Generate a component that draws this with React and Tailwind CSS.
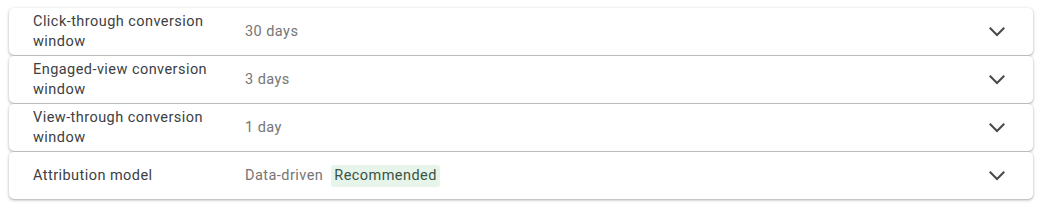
import React from "react";

const rows = [
  { label: "Click-through conversion window", value: "30 days" },
  { label: "Engaged-view conversion window", value: "3 days" },
  { label: "View-through conversion window", value: "1 day" },
  { label: "Attribution model", value: "Data-driven", badge: "Recommended" },
];

function Chevron() {
  return (
    <svg width="16" height="10" viewBox="0 0 16 10" fill="none">
      <path d="M1.5 1.5 L8 8 L14.5 1.5" stroke="#474c49" strokeWidth="2.1" strokeLinecap="square" />
    </svg>
  );
}

export default function App() {
  return (
    <div className="bg-white w-[1043px] h-[208px] pt-[8px] pl-[9px] pr-[10px]" style={{ fontFamily: "Roboto, 'Liberation Sans', sans-serif" }}>
      <div className="flex flex-col gap-[1px]">
        {rows.map((r, i) => (
          <div
            key={i}
            className="h-[47px] bg-white rounded-[5px] flex items-center pl-[24px] pr-[28px] shadow-[0_1px_2px_rgba(60,64,67,0.3),0_1px_3px_1px_rgba(60,64,67,0.12)]"
          >
            <div className="w-[188px] text-[14.5px] leading-[20px] text-[#3c4043] tracking-[0.45px]">{r.label}</div>
            <div className="ml-[24px] flex items-center gap-[8px] text-[14.5px] leading-[20px] text-[#757575] tracking-[0.45px]">
              <span>{r.value}</span>
              {r.badge && (
                <span className="bg-[#e6f4ea] text-[#3b5343] px-[3px] h-[22px] flex items-center rounded-[3px]">{r.badge}</span>
              )}
            </div>
            <div className="ml-auto flex items-center">
              <Chevron />
            </div>
          </div>
        ))}
      </div>
    </div>
  );
}
